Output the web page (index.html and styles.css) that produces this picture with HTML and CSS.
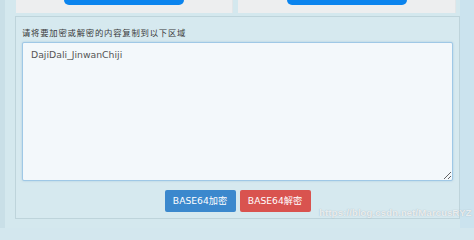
FILE: index.html
```html
<!DOCTYPE html>
<html>
<head>
<meta charset="utf-8">
<link rel="stylesheet" href="styles.css">
</head>
<body>
<div class="page">
  <div class="top">
    <div class="card"><div class="tbtn"></div></div>
    <div class="card"><div class="tbtn"></div></div>
  </div>
  <div class="panel">
    <div class="label">请将要加密或解密的内容复制到以下区域</div>
    <textarea class="area">DajiDali_JinwanChiji</textarea>
    <div class="actions">
      <button class="btn btn-blue">BASE64加密</button>
      <button class="btn btn-red">BASE64解密</button>
    </div>
  </div>
  <div class="watermark">https://blog.csdn.net/MarcusRYZ</div>
</div>
</body>
</html>
```

FILE: styles.css
```css
html, body {
  margin: 0;
  padding: 0;
  width: 474px;
  height: 228px;
  overflow: hidden;
}
body {
  background: #d3e7ee;
  font-family: "DejaVu Sans", "Noto Sans CJK SC", sans-serif;
}
.page {
  position: relative;
  height: 228px;
  box-sizing: border-box;
  padding: 0 14px 0 15px;
  background: linear-gradient(to right, #c9dfe7 0, #c9dfe7 5px, #d4e8ee 5px, #d4e8ee 460px, #cbe3ee 460px);
}
.top {
  display: grid;
  grid-template-columns: 217px 218px;
  gap: 5px;
  height: 13px;
  margin: 0 3px 0 1px;
}
.card {
  background: #edeeef;
  display: flex;
  justify-content: center;
  align-items: flex-start;
  border-right: 1px solid #e2e6e8;
}
.tbtn {
  width: 120px;
  height: 5px;
  background: #0b84ee;
  border-radius: 0 0 6px 6px;
}
.panel {
  margin-top: 3px;
  border: 1px solid #bed4db;
  background: #d6e9ef;
  padding: 9px 6px 6px 6px;
  display: flex;
  flex-direction: column;
}
.label {
  font-family: "Noto Sans CJK SC", sans-serif;
  font-size: 8.4px;
  letter-spacing: 0.75px;
  line-height: 13px;
  color: #3a3a3a;
  margin-bottom: 3px;
}
.area {
  box-sizing: border-box;
  width: 431px;
  height: 139px;
  margin: 0;
  border: 1px solid #9fc8e6;
  border-radius: 2px;
  background: #f3f8fb;
  box-shadow: 0 0 2px rgba(120, 170, 210, 0.5);
  padding: 5px 8px;
  font-family: "DejaVu Sans", sans-serif;
  font-size: 9.3px;
  color: #555;
  line-height: 13px;
  outline: none;
}
.actions {
  display: flex;
  justify-content: center;
  gap: 4px;
  margin-top: 9px;
}
.btn {
  width: 71px;
  height: 22px;
  border: none;
  border-radius: 2px;
  color: #fff;
  font-family: "DejaVu Sans", "Noto Sans CJK SC", sans-serif;
  font-size: 9.2px;
  padding: 0;
  line-height: 22px;
}
.btn-blue {
  background: #3b88cd;
}
.btn-red {
  background: #d9534f;
}
.watermark {
  position: absolute;
  left: 319px;
  top: 207px;
  font-family: "Liberation Sans", sans-serif;
  font-weight: bold;
  font-size: 9.8px;
  color: rgba(255, 255, 255, 0.75);
  text-shadow: 0 0 1px rgba(120, 130, 140, 0.6);
  white-space: nowrap;
}
```
